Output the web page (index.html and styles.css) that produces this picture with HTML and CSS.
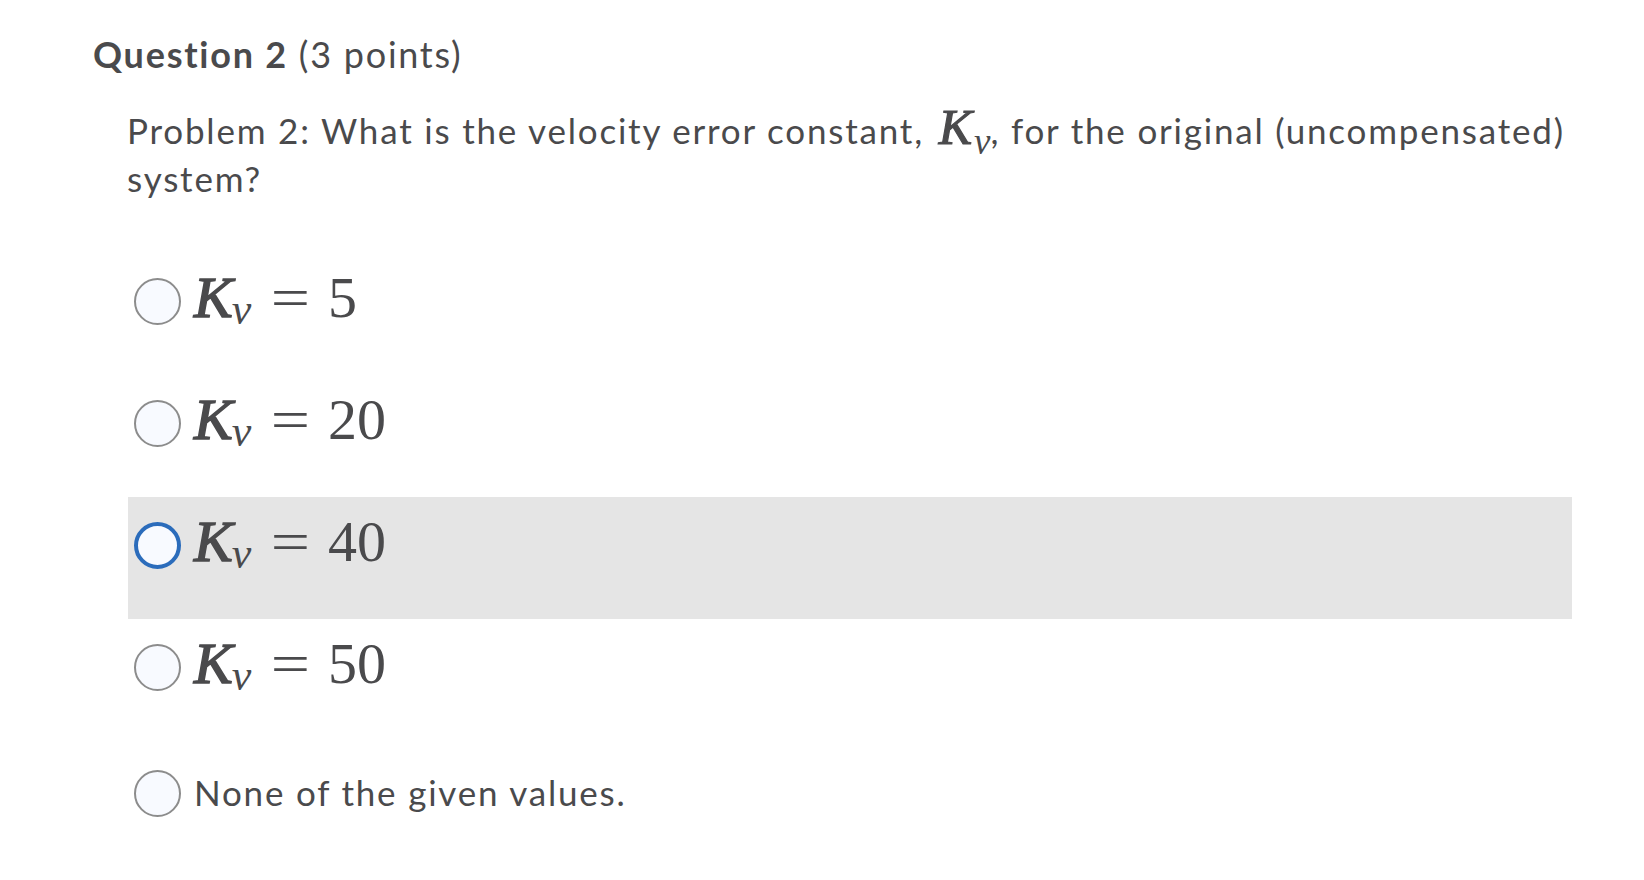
FILE: index.html
```html
<!DOCTYPE html>
<html lang="en">
<head>
<meta charset="utf-8">
<title>Question 2</title>
<link rel="stylesheet" href="styles.css">
</head>
<body>
<div class="question">
  <div class="question-header"><span class="question-name">Question 2</span> <span class="question-points">(3 points)</span></div>
  <div class="question-text">Problem 2: What is the velocity error constant, <span class="math-inline"><span class="mi">K</span><span class="msub">v</span></span>, for the original (uncompensated) system?</div>
  <div class="answers">
    <div class="answer">
      <span class="radio"></span>
      <span class="math"><span class="mi">K</span><span class="msub">v</span><span class="eq">=</span><span class="mn">5</span></span>
    </div>
    <div class="answer">
      <span class="radio"></span>
      <span class="math"><span class="mi">K</span><span class="msub">v</span><span class="eq">=</span><span class="mn">20</span></span>
    </div>
    <div class="answer answer-hover">
      <span class="radio radio-focus"></span>
      <span class="math"><span class="mi">K</span><span class="msub">v</span><span class="eq">=</span><span class="mn">40</span></span>
    </div>
    <div class="answer">
      <span class="radio"></span>
      <span class="math"><span class="mi">K</span><span class="msub">v</span><span class="eq">=</span><span class="mn">50</span></span>
    </div>
    <div class="answer answer-text">
      <span class="radio"></span>
      <span class="label">None of the given values.</span>
    </div>
  </div>
</div>
</body>
</html>
```

FILE: styles.css
```css
html, body {
  margin: 0;
  padding: 0;
  background: #ffffff;
}

body {
  font-family: Lato, "Open Sans", sans-serif;
  color: #4a4a4c;
}

.question {
  padding: 32px 0 0 93px;
}

.question-header {
  font-size: 36px;
  line-height: 44px;
  letter-spacing: 1.75px;
}

.question-name {
  font-weight: 700;
}

.question-points {
  font-weight: 400;
}

.question-text {
  margin: 30px 0 0 34px;
  width: 1490px;
  font-size: 35px;
  line-height: 48px;
  letter-spacing: 1.8px;
}

.math-inline {
  font-family: "Liberation Serif", "Times New Roman", serif;
  line-height: 0;
  letter-spacing: 0;
  margin-left: 4px;
}

.math-inline .mi {
  font-style: italic;
  font-size: 50px;
  -webkit-text-stroke: 1.2px #4a4a4c;
}

.math-inline .msub {
  font-style: italic;
  font-size: 37px;
  margin-left: 2px;
  vertical-align: -10px;
  line-height: 0;
}

.answers {
  margin: 51px 0 0 35px;
  width: 1444px;
}

.answer {
  display: flex;
  align-items: flex-start;
  height: 122px;
  box-sizing: border-box;
  padding: 13px 6px 0;
  gap: 13px;
}

.answer-hover {
  background: #e5e5e5;
}

.radio {
  flex: none;
  width: 47px;
  height: 47px;
  margin-top: 12px;
  box-sizing: border-box;
  border: 2.5px solid #8c8c8c;
  border-radius: 50%;
  background: #f8faff;
}

.radio-focus {
  border: 4px solid #2b6cbb;
}

.math {
  font-family: "Liberation Serif", "Times New Roman", serif;
  font-size: 58px;
  line-height: 64px;
  white-space: nowrap;
}

.math .mi {
  font-style: italic;
  -webkit-text-stroke: 1.5px #4a4a4c;
}

.math .msub {
  font-style: italic;
  font-size: 44px;
  margin-left: -1px;
  vertical-align: -7px;
  line-height: 0;
}

.math .eq {
  display: inline-block;
  margin: 0 21px 0 23px;
  transform: scaleX(1.2);
}

.answer-text .radio {
  margin-top: 16px;
}

.label {
  margin-top: 6px;
  font-size: 35px;
  line-height: 64px;
  letter-spacing: 1.8px;
}
```
